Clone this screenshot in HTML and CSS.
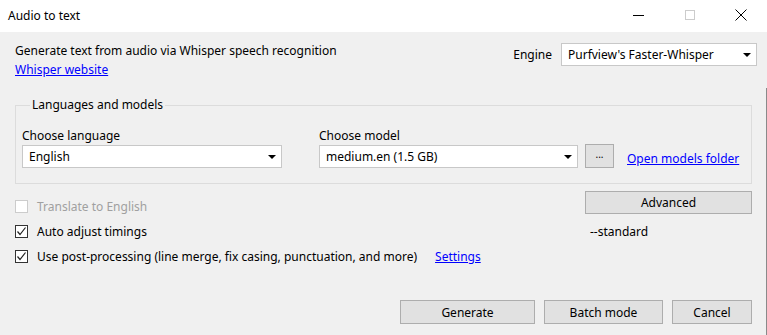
FILE: index.html
```html
<!DOCTYPE html>
<html>
<head>
<meta charset="utf-8">
<link rel="stylesheet" href="styles.css">
</head>
<body>
<div class="window">
  <div class="titlebar">
    <div class="title">Audio to text</div>
    <div class="caption">
      <div class="cap-btn"><svg width="12" height="12" viewBox="0 0 12 12"><line x1="0" y1="6.5" x2="11" y2="6.5" stroke="#000" stroke-width="1"/></svg></div>
      <div class="cap-btn"><svg width="12" height="12" viewBox="0 0 12 12"><rect x="1.5" y="1.5" width="9" height="9" fill="none" stroke="#cccccc" stroke-width="1"/></svg></div>
      <div class="cap-btn"><svg width="12" height="12" viewBox="0 0 12 12"><path d="M0.5 0.5 L11.5 11.5 M11.5 0.5 L0.5 11.5" stroke="#000" stroke-width="1"/></svg></div>
    </div>
  </div>
  <div class="content">
    <div class="header">
      <div class="intro">
        <div class="line">Generate text from audio via Whisper speech recognition</div>
        <div class="line"><a class="link" href="#">Whisper website</a></div>
      </div>
      <div class="engine">
        <span class="engine-label">Engine</span>
        <div class="combo combo-engine"><span>Purfview's Faster-Whisper</span><span class="arrow"></span></div>
      </div>
    </div>

    <fieldset class="group">
      <legend>Languages and models</legend>
      <div class="group-row">
        <div class="col col-lang">
          <div class="lbl">Choose language</div>
          <div class="combo combo-lang"><span>English</span><span class="arrow"></span></div>
        </div>
        <div class="col col-model">
          <div class="lbl">Choose model</div>
          <div class="model-row">
            <div class="combo combo-model"><span>medium.en (1.5 GB)</span><span class="arrow"></span></div>
            <div class="btn btn-dots">...</div>
            <a class="link folder-link" href="#">Open models folder</a>
          </div>
        </div>
      </div>
    </fieldset>

    <div class="options">
      <div class="checks">
        <div class="check-row disabled"><span class="cb"></span><span>Translate to English</span></div>
        <div class="check-row"><span class="cb"><svg width="11" height="11" viewBox="0 0 11 11"><path d="M1.5 5.5 L4 8.5 L9.5 1.5" fill="none" stroke="#222" stroke-width="1.2"/></svg></span><span>Auto adjust timings</span></div>
        <div class="check-row"><span class="cb"><svg width="11" height="11" viewBox="0 0 11 11"><path d="M1.5 5.5 L4 8.5 L9.5 1.5" fill="none" stroke="#222" stroke-width="1.2"/></svg></span><span>Use post-processing (line merge, fix casing, punctuation, and more)</span><a class="link settings-link" href="#">Settings</a></div>
      </div>
      <div class="side">
        <div class="btn btn-advanced">Advanced</div>
        <div class="standard">--standard</div>
      </div>
    </div>

    <div class="footer">
      <div class="btn btn-generate">Generate</div>
      <div class="btn btn-batch">Batch mode</div>
      <div class="btn btn-cancel">Cancel</div>
    </div>
  </div>
</div>
</body>
</html>
```

FILE: styles.css
```css
* { box-sizing: border-box; }
html, body {
  margin: 0;
  padding: 0;
  width: 767px;
  height: 335px;
  overflow: hidden;
  background: #f0f0f0;
}
body {
  font-family: "Noto Sans", "Open Sans", sans-serif;
  font-size: 12px;
  color: #000;
}
.window { width: 767px; height: 335px; }
.titlebar {
  height: 32px;
  background: #fff;
  display: flex;
  align-items: center;
  justify-content: space-between;
}
.title { padding-left: 8px; font-size: 12px; padding-bottom: 2px; }
.caption { display: flex; height: 32px; margin-right: 1px; }
.cap-btn {
  width: 51px;
  height: 32px;
  display: flex;
  align-items: center;
  justify-content: center;
  padding-bottom: 2px;
}
.content {
  position: relative;
  padding: 0 15px;
  height: 303px;
}
.content::after {
  content: "";
  position: absolute;
  right: 0;
  top: 56px;
  bottom: 0;
  width: 1px;
  background: #8a8a8a;
}
.header {
  display: flex;
  justify-content: space-between;
  padding-top: 9px;
}
.line { line-height: 19px; height: 19px; white-space: nowrap; }
.link { color: #0000ff; text-decoration: underline; }
.engine {
  display: flex;
  align-items: center;
  margin-top: 2px;
  margin-right: -5px;
  height: 23px;
}
.engine-label { margin-right: 9px; }
.combo {
  position: relative;
  height: 23px;
  background: #fff;
  border: 1px solid #c8c8c8;
  display: flex;
  align-items: center;
  padding-left: 6px;
  white-space: nowrap;
}
.arrow {
  position: absolute;
  right: 5px;
  top: 9px;
  width: 0;
  height: 0;
  border-left: 4px solid transparent;
  border-right: 4px solid transparent;
  border-top: 4px solid #000;
}
.combo-engine { width: 196px; }
.group {
  margin: 18px 0 0 0;
  border: 1px solid #dcdcdc;
  padding: 15px 6px 15px 6px;
  min-width: 0;
}
.group legend {
  padding: 0 2px;
  margin-left: 8px;
  line-height: 16px;
}
.group-row { display: flex; }
.lbl { line-height: 16px; height: 16px; margin-bottom: 1px; }
.col-lang { width: 297px; }
.combo-lang { width: 260px; }
.model-row { display: flex; align-items: center; }
.combo-model { width: 259px; }
.btn {
  background: #e1e1e1;
  border: 1px solid #adadad;
  display: flex;
  align-items: center;
  justify-content: center;
  white-space: nowrap;
}
.btn-dots {
  width: 29px;
  height: 24px;
  margin-left: 7px;
  margin-top: -2px;
  font-size: 10px;
  padding-bottom: 4px;
}
.folder-link { margin-left: 13px; margin-top: 4px; }
.options {
  display: flex;
  justify-content: space-between;
}
.checks { margin-top: 10px; }
.check-row {
  height: 25px;
  display: flex;
  align-items: center;
  white-space: nowrap;
}
.cb {
  width: 13px;
  height: 13px;
  border: 1px solid #333;
  background: #fff;
  margin-right: 9px;
  display: flex;
  align-items: center;
  justify-content: center;
}
.disabled { color: #a0a0a0; }
.disabled .cb { border-color: #cccccc; }
.settings-link { margin-left: 18px; }
.side { width: 167px; margin-top: 7px; }
.btn-advanced { height: 23px; width: 167px; }
.standard { margin-top: 10px; line-height: 16px; padding-left: 5px; }
.footer {
  display: flex;
  justify-content: flex-end;
  gap: 9px;
  margin-top: 31px;
}
.footer .btn { height: 24px; }
.btn-generate { width: 135px; }
.btn-batch { width: 119px; }
.btn-cancel { width: 80px; }
```
